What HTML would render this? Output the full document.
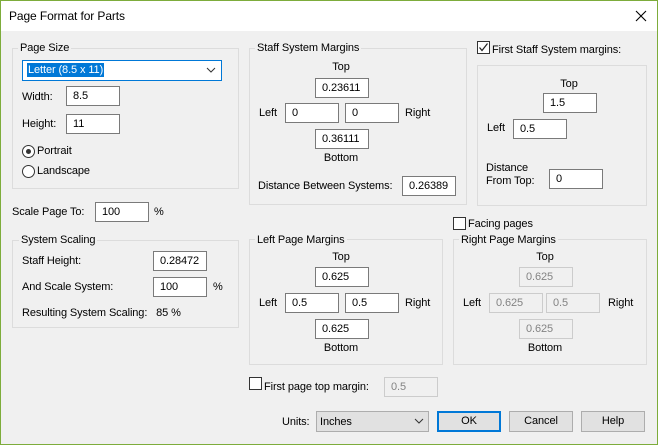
<!DOCTYPE html>
<html><head><meta charset="utf-8"><style>
*{box-sizing:border-box;margin:0;padding:0}
body{width:658px;height:445px;overflow:hidden;background:#f0f0f0;font-family:"Liberation Sans",sans-serif;font-size:11px;letter-spacing:-0.1px;color:#000;position:relative}
#win{position:absolute;left:0;top:0;width:658px;height:445px;border:1px solid #7dac3b;border-top:none}
#tb{position:absolute;left:0;top:0;width:658px;height:31px;background:#fff;border-top:1px solid #7dac3b;border-left:1px solid #7dac3b;border-right:1px solid #7dac3b}
.t{position:absolute;line-height:14px;white-space:nowrap}
.c{text-align:center;width:60px}
.g{position:absolute;border:1px solid #dcdcdc}
.gl{position:absolute;background:#f0f0f0;padding:0 2px;line-height:14px;white-space:nowrap}
.i{position:absolute;height:20px;background:#fff;border:1px solid #7a7a7a;padding-left:6px;line-height:18px;width:54px}
.d{background:#f0f0f0;border-color:#cccccc;color:#838383}
.cb{position:absolute;width:13px;height:13px;border:1px solid #333;background:#fff}
.rb{position:absolute;width:13px;height:13px;border:1px solid #333;border-radius:50%;background:#fff}
.btn{position:absolute;height:21px;width:64px;background:#e1e1e1;border:1px solid #adadad;text-align:center;line-height:19px}
</style></head><body>
<div id="win"></div>
<div id="tb"></div>
<div class="t" style="left:9px;top:9px;font-size:12px">Page Format for Parts</div>
<svg style="position:absolute;left:635px;top:10px" width="12" height="12"><path d="M1 1L11 11M11 1L1 11" stroke="#000" stroke-width="1.1"/></svg>

<!-- Page Size -->
<div class="g" style="left:12px;top:48px;width:227px;height:141px"></div>
<div class="gl" style="left:18px;top:41px">Page Size</div>
<div style="position:absolute;left:22px;top:60px;width:200px;height:21px;background:#fff;border:1px solid #0078d7"></div>
<div class="t" style="left:27px;top:63px;background:#0078d7;color:#fff;padding:0 1px">Letter (8.5 x 11)</div>
<svg style="position:absolute;left:206px;top:67px" width="10" height="7"><path d="M1 1L5 5L9 1" stroke="#333" fill="none"/></svg>
<div class="t" style="left:22px;top:90px">Width:</div>
<div class="i" style="left:66px;top:86px">8.5</div>
<div class="t" style="left:22px;top:117px">Height:</div>
<div class="i" style="left:66px;top:114px">11</div>
<div class="rb" style="left:22px;top:145px"></div><div style="position:absolute;left:26px;top:149px;width:5px;height:5px;border-radius:50%;background:#333"></div>
<div class="t" style="left:37px;top:144px">Portrait</div>
<div class="rb" style="left:22px;top:165px"></div>
<div class="t" style="left:37px;top:164px">Landscape</div>
<div class="t" style="left:12px;top:205px">Scale Page To:</div>
<div class="i" style="left:95px;top:202px">100</div>
<div class="t" style="left:154px;top:205px">%</div>

<!-- System Scaling -->
<div class="g" style="left:12px;top:240px;width:227px;height:88px"></div>
<div class="gl" style="left:19px;top:233px">System Scaling</div>
<div class="t" style="left:22px;top:254px">Staff Height:</div>
<div class="i" style="left:153px;top:251px">0.28472</div>
<div class="t" style="left:22px;top:280px">And Scale System:</div>
<div class="i" style="left:153px;top:277px">100</div>
<div class="t" style="left:213px;top:280px">%</div>
<div class="t" style="left:22px;top:306px">Resulting System Scaling:&nbsp;&nbsp; 85 %</div>

<!-- Staff System Margins -->
<div class="g" style="left:249px;top:48px;width:218px;height:157px"></div>
<div class="gl" style="left:255px;top:41px">Staff System Margins</div>
<div class="t c" style="left:311px;top:60px">Top</div>
<div class="i" style="left:315px;top:78px">0.23611</div>
<div class="t" style="left:259px;top:106px">Left</div>
<div class="i" style="left:285px;top:103px">0</div>
<div class="i" style="left:345px;top:103px">0</div>
<div class="t" style="left:405px;top:106px">Right</div>
<div class="i" style="left:315px;top:129px">0.36111</div>
<div class="t c" style="left:311px;top:151px">Bottom</div>
<div class="t" style="left:258px;top:179px">Distance Between Systems:</div>
<div class="i" style="left:402px;top:176px">0.26389</div>

<!-- First staff -->
<div class="cb" style="left:477px;top:41px"></div>
<svg style="position:absolute;left:478px;top:42px" width="11" height="11"><path d="M1.5 5.5L4 8.5L9.5 1.5" stroke="#222" fill="none" stroke-width="1.2"/></svg>
<div class="t" style="left:492px;top:43px">First Staff System margins:</div>
<div class="g" style="left:477px;top:65px;width:170px;height:141px"></div>
<div class="t c" style="left:539px;top:77px">Top</div>
<div class="i" style="left:543px;top:93px">1.5</div>
<div class="t" style="left:487px;top:121px">Left</div>
<div class="i" style="left:513px;top:119px">0.5</div>
<div class="t" style="left:486px;top:161px">Distance</div>
<div class="t" style="left:486px;top:174px">From Top:</div>
<div class="i" style="left:549px;top:169px">0</div>

<!-- Facing -->
<div class="cb" style="left:453px;top:217px"></div>
<div class="t" style="left:468px;top:217px">Facing pages</div>

<!-- Left Page Margins -->
<div class="g" style="left:249px;top:239px;width:194px;height:126px"></div>
<div class="gl" style="left:255px;top:233px">Left Page Margins</div>
<div class="t c" style="left:311px;top:250px">Top</div>
<div class="i" style="left:315px;top:267px">0.625</div>
<div class="t" style="left:259px;top:296px">Left</div>
<div class="i" style="left:285px;top:293px">0.5</div>
<div class="i" style="left:345px;top:293px">0.5</div>
<div class="t" style="left:405px;top:296px">Right</div>
<div class="i" style="left:315px;top:319px">0.625</div>
<div class="t c" style="left:311px;top:341px">Bottom</div>

<!-- Right Page Margins -->
<div class="g" style="left:453px;top:239px;width:194px;height:126px"></div>
<div class="gl" style="left:459px;top:233px">Right Page Margins</div>
<div class="t c" style="left:515px;top:250px">Top</div>
<div class="i d" style="left:519px;top:267px">0.625</div>
<div class="t" style="left:463px;top:296px">Left</div>
<div class="i d" style="left:489px;top:293px">0.625</div>
<div class="i d" style="left:546px;top:293px">0.5</div>
<div class="t" style="left:608px;top:296px">Right</div>
<div class="i d" style="left:519px;top:319px">0.625</div>
<div class="t c" style="left:515px;top:341px">Bottom</div>

<!-- First page top margin -->
<div class="cb" style="left:249px;top:377px"></div>
<div class="t" style="left:264px;top:380px">First page top margin:</div>
<div class="i d" style="left:384px;top:377px">0.5</div>

<!-- bottom -->
<div class="t" style="left:282px;top:415px">Units:</div>
<div style="position:absolute;left:316px;top:411px;width:113px;height:21px;background:#e1e1e1;border:1px solid #adadad"></div>
<div class="t" style="left:320px;top:415px">Inches</div>
<svg style="position:absolute;left:414px;top:418px" width="10" height="7"><path d="M1 1L5 5L9 1" stroke="#333" fill="none"/></svg>
<div class="btn" style="left:437px;top:411px;border:2px solid #0078d7;line-height:17px">OK</div>
<div class="btn" style="left:509px;top:411px">Cancel</div>
<div class="btn" style="left:581px;top:411px">Help</div>
</body></html>
